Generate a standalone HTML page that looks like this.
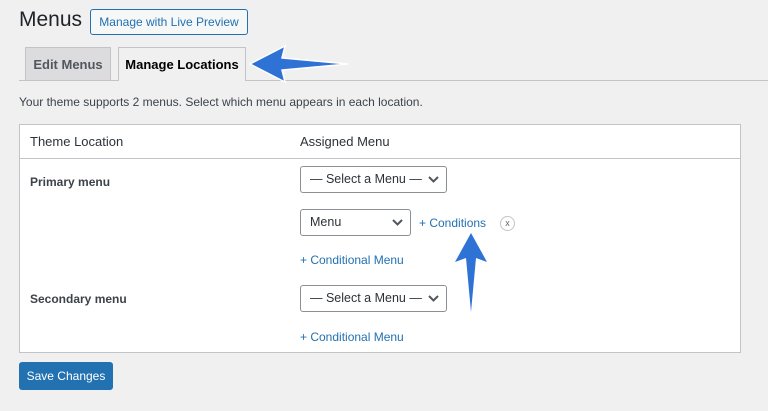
<!DOCTYPE html><html><head><style>
body{margin:0;width:768px;height:411px;background:#f0f0f1;font-family:"Liberation Sans",sans-serif;color:#1d2327;position:relative;overflow:hidden;font-size:12px}
.a{position:absolute;white-space:nowrap}
.sel{position:absolute;background:#fff;border:1px solid #8c8f94;border-radius:3px;box-sizing:border-box;font-size:12.5px;color:#2c3338;padding-left:9px;line-height:25px}
.sel svg{position:absolute;right:7px;top:9px}
.lnk{color:#2271b1}
</style></head><body>
<div class="a" style="left:19px;top:8px;font-size:21px;color:#1d2327">Menus</div>
<div class="a" style="left:90px;top:9px;width:158px;height:26px;box-sizing:border-box;border:1px solid #2271b1;border-radius:3px;background:#f6f7f7;color:#2271b1;font-size:12px;text-align:center;line-height:24px">Manage with Live Preview</div>
<div class="a" style="left:19px;top:80px;width:749px;height:1px;background:#c3c4c7"></div>
<div class="a" style="left:25px;top:47px;width:86px;height:33px;box-sizing:border-box;border:1px solid #c3c4c7;border-bottom:none;background:#dcdcde;font-weight:bold;font-size:13px;color:#50575e;text-align:center;line-height:33px">Edit Menus</div>
<div class="a" style="left:118px;top:47px;width:128px;height:34px;box-sizing:border-box;border:1px solid #c3c4c7;border-bottom:none;background:#f0f0f1;font-weight:bold;font-size:13px;color:#000;text-align:center;line-height:33px">Manage Locations</div>
<div class="a" style="left:19px;top:95px;font-size:12px;color:#3c434a">Your theme supports 2 menus. Select which menu appears in each location.</div>
<div class="a" style="left:19px;top:124px;width:722px;height:229px;box-sizing:border-box;background:#fff;border:1px solid #c3c4c7"></div>
<div class="a" style="left:20px;top:158px;width:720px;height:1px;background:#c3c4c7"></div>
<div class="a" style="left:30px;top:134px;font-size:13px;color:#2c3338">Theme Location</div>
<div class="a" style="left:300px;top:134px;font-size:13px;color:#2c3338">Assigned Menu</div>
<div class="a" style="left:30px;top:175px;font-size:12px;color:#3c434a"><b style="font-weight:600">Primary menu</b></div>
<div class="a" style="left:30px;top:292px;font-size:12px;color:#3c434a"><b style="font-weight:600">Secondary menu</b></div>
<div class="sel" style="left:300px;top:166px;width:147px;height:27px">— Select a Menu —<svg width="11" height="8"><path d="M1 1l4.5 4.5L10 1" stroke="#50575e" stroke-width="2" fill="none"/></svg></div>
<div class="sel" style="left:300px;top:209px;width:111px;height:27px">Menu<svg width="11" height="8"><path d="M1 1l4.5 4.5L10 1" stroke="#50575e" stroke-width="2" fill="none"/></svg></div>
<div class="sel" style="left:300px;top:285px;width:147px;height:27px">— Select a Menu —<svg width="11" height="8"><path d="M1 1l4.5 4.5L10 1" stroke="#50575e" stroke-width="2" fill="none"/></svg></div>
<div class="a lnk" style="left:419px;top:216px">+ Conditions</div>
<div class="a" style="left:500px;top:216px;width:15px;height:15px;border:1px solid #c3c4c7;border-radius:50%;box-sizing:border-box;font-size:9px;color:#666;text-align:center;line-height:12px">x</div>
<div class="a lnk" style="left:300px;top:253px">+ Conditional Menu</div>
<div class="a lnk" style="left:300px;top:330px">+ Conditional Menu</div>
<div class="a" style="left:19px;top:362px;width:94px;height:28px;background:#2271b1;border-radius:3px;color:#fff;font-size:12px;text-align:center;line-height:28px">Save Changes</div>
<svg class="a" style="left:0;top:0" width="768" height="411">
<path d="M250 64 L285 46 L282 58 L348 64 L282 70 L285 82 Z" fill="#2f72d6" stroke="#fff" stroke-width="1.5"/>
<path d="M471 233 L487 262 L476 258 L471 312 L466 258 L455 262 Z" fill="#2f72d6"/>
</svg>
</body></html>
